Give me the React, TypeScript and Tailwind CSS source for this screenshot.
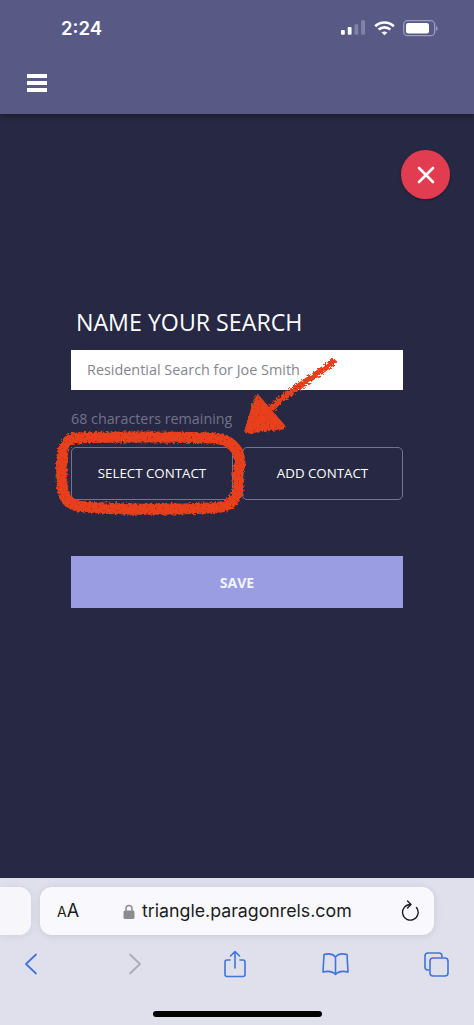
const openSans = { fontFamily: '"Open Sans", sans-serif' };

function StatusIcons() {
  return (
    <div className="flex items-center">
      <svg width="24" height="16" viewBox="0 0 25 16">
        <rect x="0" y="10" width="4" height="5" rx="1" fill="#fff" />
        <rect x="7" y="7" width="4" height="8" rx="1" fill="#fff" />
        <rect x="14" y="4" width="4" height="11" rx="1" fill="#8183a8" />
        <rect x="21" y="0" width="4" height="15" rx="1" fill="#8183a8" />
      </svg>
      <svg width="21" height="16" viewBox="0.300 0 21.400 16" fill="none" stroke="#fff" strokeWidth="2.6" className="ml-[9px] mr-[8px]">
        <path d="M1.5 6.2C7 1 15 1 20.5 6.2" />
        <path d="M5 9.6c3.4-3 8.6-3 12 0" />
        <path d="M11 15.5l-3-3c1.8-1.3 4.2-1.3 6 0z" fill="#fff" stroke="none" />
      </svg>
      <svg width="35" height="17" viewBox="0 0 35 17">
        <rect x="0.7" y="0.7" width="31" height="15" rx="4" fill="none" stroke="#9a9cc0" strokeWidth="1.3" />
        <rect x="3" y="3" width="23" height="10.5" rx="2.2" fill="#fff" />
        <path d="M33 6v5c1-.4 1.6-1.4 1.6-2.5S34 6.400 33 6z" fill="#9a9cc0" />
      </svg>
    </div>
  );
}

function Header() {
  return (
    <header className="h-[114px] shrink-0 bg-[#595985] shadow-[0_2px_6px_rgba(0,0,0,0.35)] relative z-10">
      <div className="flex items-center justify-between pl-[61px] pr-[36px] pt-[15px] h-[41px]">
        <span
          className="text-white text-[18.500px] font-semibold leading-none"
          style={{ fontFamily: 'Inter, sans-serif' }}
        >
          2:24
        </span>
        <StatusIcons />
      </div>
      <div className="pl-[27px] pt-[33px] flex flex-col gap-[3px] w-fit">
        <div className="w-[20px] h-[4px] bg-white" />
        <div className="w-[20px] h-[4px] bg-white" />
        <div className="w-[20px] h-[4px] bg-white" />
      </div>
    </header>
  );
}

function Scribble() {
  return (
    <svg className="absolute left-[40px] top-[236px] pointer-events-none" width="310" height="170" viewBox="0 0 310 170" fill="none">
      <defs>
        <filter id="rough" x="-5%" y="-5%" width="110%" height="110%">
          <feTurbulence type="fractalNoise" baseFrequency="0.45" numOctaves="2" seed="4" result="noise" />
          <feDisplacementMap in="SourceGraphic" in2="noise" scale="5" result="ink" />
          <feColorMatrix
            in="noise"
            type="matrix"
            values="0 0 0 0 0  0 0 0 0 0  0 0 0 0 0  5 0 0 0 -3.200"
            result="specks"
          />
          <feFlood floodColor="#8f2a1c" />
          <feComposite in2="specks" operator="in" />
          <feComposite in2="ink" operator="in" result="dark" />
          <feMerge>
            <feMergeNode in="ink" />
            <feMergeNode in="dark" />
          </feMerge>
        </filter>
      </defs>
      <g filter="url(#rough)" stroke="#e8401f" strokeLinecap="round" strokeLinejoin="round">
        <path
          d="M34 88C66 87 130 87 172 88C190 89 199 98 200 112C200 118 197 122 198 130C200 150 190 158 170 158C130 160 70 160 38 156C26 154 22 144 22 132C22 118 20 108 24 98C26 92 30 89 34 88Z"
          strokeWidth="11"
        />
        <path d="M293 12C274 27 257 37 240 50C236 54 232 57 228 62" strokeWidth="6.500" />
        <path d="M217 47L207 81L243 77Z" fill="#e8401f" strokeWidth="5" />
      </g>
    </svg>
  );
}

function Form() {
  return (
    <main className="flex-1 bg-[#272843] relative" style={openSans}>
      <div className="flex justify-end pt-[36px] pr-[24px]">
        <button className="w-[49px] h-[49px] rounded-full bg-[#e23c50] flex items-center justify-center shadow-[0_1px_3px_rgba(0,0,0,0.3)]">
          <svg width="18" height="18" viewBox="0 0 18 18" stroke="#fff" strokeWidth="2.600" strokeLinecap="round">
            <path d="M2 2L16 16M16 2L2 16" />
          </svg>
        </button>
      </div>
      <div className="pl-[71px] pr-[71px] pt-[108px]">
        <h1 className="pl-[5px] text-white text-[23.200px] leading-[31px]">NAME YOUR SEARCH</h1>
        <div className="mt-[12px] h-[40px] bg-white flex items-center pl-[16px] text-[14.400px] text-[#85868f]">
          Residential Search for Joe Smith
        </div>
        <p className="mt-[19px] text-[14.300px] leading-[20px] text-[#71728a]">68 characters remaining</p>
        <div className="mt-[18px] flex gap-[9px]">
          <button className="w-[162px] h-[53px] pt-[1px] rounded-[5px] border border-[#73748f] text-white text-[13.300px]">
            SELECT CONTACT
          </button>
          <button className="flex-1 h-[53px] pt-[1px] rounded-[5px] border border-[#73748f] text-white text-[13.300px]">
            ADD CONTACT
          </button>
        </div>
        <button className="mt-[56px] w-full h-[52px] pt-[1px] bg-[#9a9de2] text-[#f3f3fc] text-[14px] font-bold">SAVE</button>
      </div>
      <Scribble />
    </main>
  );
}

function BrowserBar() {
  const blue = '#3f74d8';
  return (
    <footer className="h-[147px] shrink-0 bg-[#dfe0ec]" style={{ fontFamily: 'Inter, sans-serif' }}>
      <div className="flex gap-[9px] pt-[9px]">
        <div className="w-[31px] h-[48px] bg-[#f7f7fb] rounded-r-[12px] shadow-[0_1px_8px_rgba(0,0,0,0.08)]" />
        <div className="w-[394px] h-[48px] bg-[#f9f9fd] rounded-[12px] shadow-[0_1px_8px_rgba(0,0,0,0.1)] flex items-center pl-[17px] pr-[15px] text-[#1c1c22]">
          <span className="w-[66px] leading-none">
            <span className="text-[14px]">A</span>
            <span className="text-[18px]">A</span>
          </span>
          <svg width="12" height="15" viewBox="0 0 12 15" className="mr-[7px]">
            <path d="M3 7V4.500a3 3 0 0 1 6 0V7" fill="none" stroke="#8b8b90" strokeWidth="1.500" />
            <rect x="0.500" y="6.500" width="11" height="8.500" rx="1.500" fill="#8b8b90" />
          </svg>
          <span className="text-[17.750px] leading-none">triangle.paragonrels.com</span>
          <svg width="18" height="22" viewBox="0 0 18 22" fill="none" stroke="#1c1c22" strokeWidth="1.400" className="ml-auto">
            <path d="M9.500 4.500A7.800 7.800 0 1 0 15.500 7.500" strokeLinecap="round" />
            <path d="M6.500 1L10 4.500L6.500 8" strokeLinecap="round" strokeLinejoin="round" />
          </svg>
        </div>
      </div>
      <div className="flex items-center pl-[24px] mt-[14px] h-[30px]">
        <svg width="14" height="22" viewBox="0 0 14 22" fill="none" stroke={blue} strokeWidth="1.800" strokeLinecap="round" strokeLinejoin="round">
          <path d="M12 1.500L2 11L12 20.500" />
        </svg>
        <svg width="14" height="22" viewBox="0 0 14 22" fill="none" stroke="#a9aab4" strokeWidth="1.800" strokeLinecap="round" strokeLinejoin="round" className="ml-[90px]">
          <path d="M2 1.500L12 11L2 20.500" />
        </svg>
        <svg width="22" height="28" viewBox="0 0 22 28" fill="none" stroke={blue} strokeWidth="1.600" strokeLinecap="round" strokeLinejoin="round" className="ml-[82px]">
          <path d="M6 10H3a2 2 0 0 0-2 2v12.500a2 2 0 0 0 2 2h16a2 2 0 0 0 2-2V12a2 2 0 0 0-2-2h-3" />
          <path d="M11 18V1.500M6.500 6L11 1.500L15.500 6" />
        </svg>
        <svg width="27" height="24" viewBox="0 0 27 24" fill="none" stroke={blue} strokeWidth="1.600" strokeLinecap="round" strokeLinejoin="round" className="ml-[76px]">
          <path d="M13.500 5C11 2 6 1.500 2 2.500L1 20c4-1 9.500-.8 12.500 2.500C16.500 19.200 22 19 26 20L25 2.500C21 1.500 16 2 13.500 5V22" />
        </svg>
        <svg width="25" height="25" viewBox="0 0 25 25" fill="none" stroke={blue} strokeWidth="1.600" strokeLinejoin="round" className="ml-[75px]">
          <path d="M5.500 18H4a3 3 0 0 1-3-3V4a3 3 0 0 1 3-3h11a3 3 0 0 1 3 3v1.500" />
          <rect x="6" y="6" width="18" height="18" rx="3" />
        </svg>
      </div>
      <div className="mt-[32px] mx-auto w-[169px] h-[6px] rounded-full bg-black" />
    </footer>
  );
}

export default function App() {
  return (
    <div className="w-[474px] h-[1025px] flex flex-col overflow-hidden">
      <Header />
      <Form />
      <BrowserBar />
    </div>
  );
}
